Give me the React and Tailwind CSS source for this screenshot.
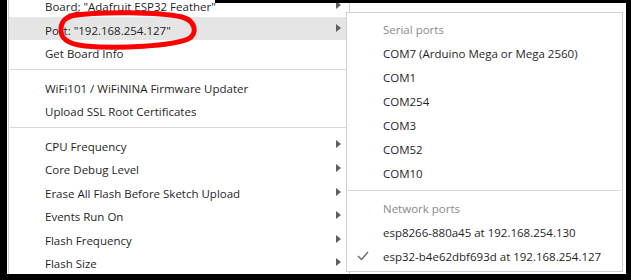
import React from 'react';

const font = { fontFamily: '"Open Sans", "Noto Sans", sans-serif' };

const Arrow = () => (
  <svg width="5" height="8" viewBox="0 0 5 8" className="shrink-0">
    <path d="M0 0 L5 4 L0 8 Z" fill="#5f5f5f" />
  </svg>
);

const MenuItem = ({ label, arrow = false, active = false }) => (
  <div
    className={`flex h-6 items-center justify-between pl-9 pr-2 pt-1 ${active ? 'bg-[#e5e5e5]' : ''}`}
  >
    <span className="whitespace-nowrap text-[11.5px] leading-none text-[#1f1f1f]">{label}</span>
    {arrow && (
      <span className="-mt-1">
        <Arrow />
      </span>
    )}
  </div>
);

const Sep = () => <div className="my-[5px] ml-[1px] h-px bg-[#d9d9d9]" />;

const SubItem = ({ label, header = false, checked = false }) => (
  <div className="relative flex h-6 items-center pl-9 pt-px">
    {checked && (
      <svg width="12" height="10" viewBox="0 0 12 10" className="absolute left-[10px] top-[7px]">
        <path d="M1 5 L4.5 8.5 L11 1" fill="none" stroke="#6b6b6b" strokeWidth="1.4" />
      </svg>
    )}
    <span
      className={`whitespace-nowrap text-[11.5px] leading-none ${header ? 'text-[#8a8a8a]' : 'text-[#1f1f1f]'}`}
    >
      {label}
    </span>
  </div>
);

export default function App() {
  return (
    <div
      style={font}
      className="relative flex h-[280px] w-[631px] overflow-hidden border-b-[6px] border-l-[7px] border-r-[5px] border-black bg-white"
    >
      {/* main menu */}
      <div className="ml-[1px] -mt-[7px] flex w-[342px] flex-col border-x border-[#cfcfcf] bg-white">
        <MenuItem label={'Board: "Adafruit ESP32 Feather"'} arrow />
        <MenuItem label={'Port: "192.168.254.127"'} arrow active />
        <MenuItem label="Get Board Info" />
        <Sep />
        <MenuItem label="WiFi101 / WiFiNINA Firmware Updater" />
        <MenuItem label="Upload SSL Root Certificates" />
        <Sep />
        <MenuItem label="CPU Frequency" arrow />
        <MenuItem label="Core Debug Level" arrow />
        <MenuItem label="Erase All Flash Before Sketch Upload" arrow />
        <MenuItem label="Events Run On" arrow />
        <MenuItem label="Flash Frequency" arrow />
        <MenuItem label="Flash Size" arrow />
      </div>

      {/* window frame edge above the menu */}
      <div className="absolute left-[208px] right-0 top-0 h-[3px] bg-black" />

      {/* ports submenu */}
      <div className="absolute left-[339px] top-[12px] flex w-[277px] flex-col border border-[#d0d0d0] bg-white pb-[3px] pt-1">
        <SubItem label="Serial ports" header />
        <SubItem label="COM7 (Arduino Mega or Mega 2560)" />
        <SubItem label="COM1" />
        <SubItem label="COM254" />
        <SubItem label="COM3" />
        <SubItem label="COM52" />
        <SubItem label="COM10" />
        <div className="my-[5px] mx-[1px] h-px bg-[#d9d9d9]" />
        <SubItem label="Network ports" header />
        <SubItem label="esp8266-880a45 at 192.168.254.130" />
        <SubItem label="esp32-b4e62dbf693d at 192.168.254.127" checked />
      </div>

      {/* red annotation */}
      <svg
        width="631"
        height="280"
        className="pointer-events-none absolute left-[-7px] top-0"
      >
        <path
          d="M70 16 C100 11, 160 12, 182 17 C196 21, 198 34, 188 39 C172 46, 120 49, 85 46 C66 44, 60 38, 61 28 C62 20, 66 17, 78 14"
          fill="none"
          stroke="#ff0000"
          strokeWidth="5"
          strokeLinecap="round"
        />
      </svg>
    </div>
  );
}
